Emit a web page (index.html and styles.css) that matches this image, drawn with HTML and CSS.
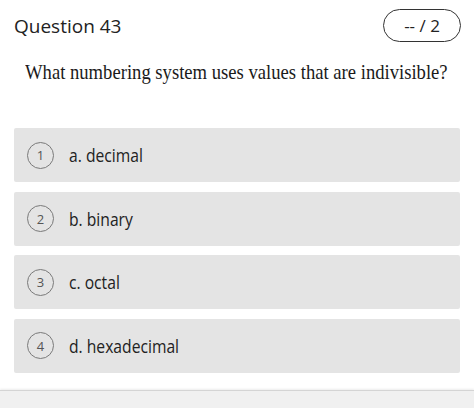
FILE: index.html
```html
<!DOCTYPE html>
<html>
<head>
<meta charset="utf-8">
<link rel="stylesheet" href="styles.css">
</head>
<body>
<div class="page">
  <div class="header">
    <div class="title">Question 43</div>
    <div class="score">-- / 2</div>
  </div>
  <div class="question"><span class="qtext">What numbering system uses values that are indivisible?</span></div>
  <div class="options">
    <div class="option"><span class="num">1</span><span class="label">a. decimal</span></div>
    <div class="option"><span class="num">2</span><span class="label">b. binary</span></div>
    <div class="option"><span class="num">3</span><span class="label">c. octal</span></div>
    <div class="option"><span class="num">4</span><span class="label">d. hexadecimal</span></div>
  </div>
</div>
<div class="footer"></div>
</body>
</html>
```

FILE: styles.css
```css
html, body {
  margin: 0;
  padding: 0;
  background: #ffffff;
}
body {
  width: 474px;
  height: 408px;
  overflow: hidden;
  font-family: "Open Sans", "Liberation Sans", sans-serif;
  color: #222222;
}
.page {
  padding: 9px 13px 0 14px;
  height: 381px;
}
.header {
  display: flex;
  justify-content: space-between;
  align-items: center;
  height: 33px;
}
.title {
  font-size: 19px;
  color: #222;
}
.score {
  box-sizing: border-box;
  width: 78px;
  height: 33px;
  border: 1px solid #333;
  border-radius: 17px;
  display: flex;
  align-items: center;
  justify-content: center;
  font-size: 17px;
  color: #222;
}
.question {
  font-family: "Liberation Serif", "Times New Roman", serif;
  font-size: 21px;
  color: #1a1a1a;
  margin-top: 18px;
  padding-left: 11px;
  line-height: 24px;
  white-space: nowrap;
  overflow: hidden;
}
.qtext {
  display: inline-block;
  transform: scaleX(0.887);
  transform-origin: left center;
}
.options {
  margin-top: 44px;
  margin-right: 1px;
  display: flex;
  flex-direction: column;
  gap: 9.5px;
}
.option {
  height: 54px;
  background: #e4e4e4;
  border-radius: 2px;
  display: flex;
  align-items: center;
  padding-left: 13px;
}
.num {
  box-sizing: border-box;
  width: 27px;
  height: 27px;
  border: 1px solid #7a7a7a;
  border-radius: 50%;
  display: flex;
  align-items: center;
  justify-content: center;
  font-size: 13px;
  color: #555;
}
.label {
  display: inline-block;
  margin-left: 15px;
  font-size: 18px;
  color: #222;
  transform: scaleX(0.87);
  transform-origin: left center;
}
.footer {
  height: 27px;
  background: #f0f0f0;
  border-top: 1px solid #d4d4d4;
  box-shadow: 0 -1px 2px rgba(0,0,0,0.08);
}
```
